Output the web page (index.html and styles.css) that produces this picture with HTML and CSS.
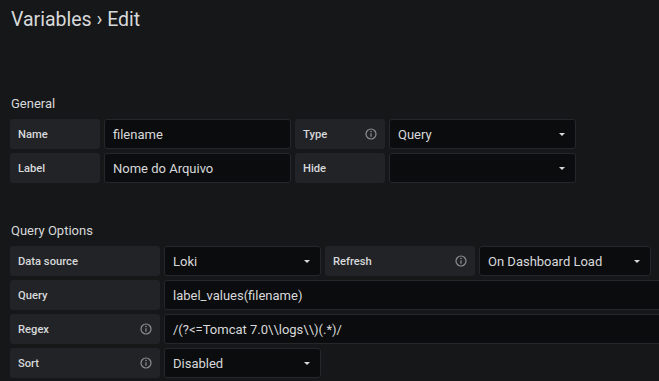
FILE: index.html
```html
<!DOCTYPE html>
<html lang="en">
<head>
  <meta charset="UTF-8" />
  <title>Variables - Edit</title>
  <link rel="stylesheet" href="styles.css">
</head>
<body>

  <div class="page">
    <h1 class="title">Variables › Edit</h1>

    <h5 class="section-title section-general">General</h5>
    <div class="form-row">
      <div class="form-label w-90">Name</div>
      <div class="form-input w-187">filename</div>
      <div class="form-label w-90">Type
        <svg class="info" viewBox="0 0 12 12"><circle cx="6" cy="6" r="5" /><line x1="6" y1="5.3" x2="6" y2="8.8" /><circle class="dot" cx="6" cy="3.5" r="0.8" /></svg>
      </div>
      <div class="form-input form-select w-187">Query <span class="caret"></span></div>
    </div>
    <div class="form-row">
      <div class="form-label w-90">Label</div>
      <div class="form-input w-187">Nome do Arquivo</div>
      <div class="form-label w-90">Hide</div>
      <div class="form-input form-select w-187"><span></span> <span class="caret"></span></div>
    </div>

    <h5 class="section-title section-query">Query Options</h5>
    <div class="form-row">
      <div class="form-label w-150">Data source</div>
      <div class="form-input form-select w-157">Loki <span class="caret"></span></div>
      <div class="form-label w-150">Refresh
        <svg class="info" viewBox="0 0 12 12"><circle cx="6" cy="6" r="5" /><line x1="6" y1="5.3" x2="6" y2="8.8" /><circle class="dot" cx="6" cy="3.5" r="0.8" /></svg>
      </div>
      <div class="form-input form-select w-172">On Dashboard Load <span class="caret"></span></div>
    </div>
    <div class="form-row">
      <div class="form-label w-150">Query</div>
      <div class="form-input w-wide">label_values(filename)</div>
    </div>
    <div class="form-row">
      <div class="form-label w-150">Regex
        <svg class="info" viewBox="0 0 12 12"><circle cx="6" cy="6" r="5" /><line x1="6" y1="5.3" x2="6" y2="8.8" /><circle class="dot" cx="6" cy="3.5" r="0.8" /></svg>
      </div>
      <div class="form-input w-wide">/(?&lt;=Tomcat 7.0\\logs\\)(.*)/</div>
    </div>
    <div class="form-row">
      <div class="form-label w-150">Sort
        <svg class="info" viewBox="0 0 12 12"><circle cx="6" cy="6" r="5" /><line x1="6" y1="5.3" x2="6" y2="8.8" /><circle class="dot" cx="6" cy="3.5" r="0.8" /></svg>
      </div>
      <div class="form-input form-select w-157">Disabled <span class="caret"></span></div>
    </div>
  </div>

</body>
</html>
```

FILE: styles.css
```css
html, body {
  margin: 0;
  height: 100%;
  background: #161719;
  overflow: hidden;
}
body {
  font-family: Roboto, "Liberation Sans", sans-serif;
  color: #d8d9da;
}
.page {
  padding: 0 10px;
}
.title {
  margin: 8px 0 0 1px;
  font-size: 19.5px;
  line-height: 24px;
  font-weight: 400;
  color: #d8d9da;
}
.section-title {
  margin: 0 0 5px 1px;
  font-size: 13px;
  line-height: 20px;
  font-weight: 400;
  color: #d8d9da;
}
.section-general {
  margin-top: 62px;
}
.section-query {
  margin-top: 38px;
}
.form-row {
  display: flex;
  gap: 4px;
  margin-bottom: 4px;
}
.form-label {
  flex-shrink: 0;
  box-sizing: border-box;
  height: 30px;
  padding: 0 8px;
  display: flex;
  align-items: center;
  justify-content: space-between;
  background: #212327;
  border-radius: 3px;
  font-size: 11.2px;
  font-weight: 500;
  color: #d8d9da;
}
.form-input {
  flex-shrink: 0;
  box-sizing: border-box;
  height: 30px;
  padding: 0 8px;
  display: flex;
  align-items: center;
  background: #0b0c0e;
  border: 1px solid #26272a;
  border-radius: 3px;
  font-size: 13px;
  color: #d8d9da;
}
.form-select {
  justify-content: space-between;
  padding-right: 10px;
}
.caret {
  width: 0;
  height: 0;
  border-left: 3px solid transparent;
  border-right: 3px solid transparent;
  border-top: 3px solid #d8d9da;
}
.info {
  width: 12px;
  height: 12px;
  fill: none;
  stroke: #8e8e8e;
  stroke-width: 1.2;
}
.info .dot {
  fill: #8e8e8e;
  stroke: none;
}
.w-90 { width: 90px; }
.w-150 { width: 150px; }
.w-157 { width: 157px; }
.w-172 { width: 172px; }
.w-187 { width: 187px; }
.w-wide { width: 560px; }
```
